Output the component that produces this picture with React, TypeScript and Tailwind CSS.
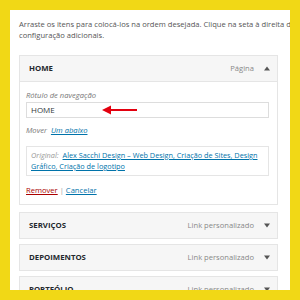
const rows = ['SERVIÇOS', 'DEPOIMENTOS', 'PORTFÓLIO'];

const Caret = ({ up }: { up?: boolean }) => (
  <svg width="6" height="5" viewBox="0 0 6 5" className="ml-[10px]">
    {up ? <path d="M0 4.5 L3 0.5 L6 4.5 Z" fill="#555" /> : <path d="M0 0.5 L3 4.5 L6 0.5 Z" fill="#555" />}
  </svg>
);

export default function App() {
  return (
    <div className="w-[300px] h-[300px] bg-[#f1d816] pt-[10px] pl-[10px]" style={{ fontFamily: '"Open Sans", "Noto Sans", sans-serif' }}>
      <div className="w-[280px] h-[280px] bg-white overflow-hidden pl-[9px] pr-[12px] pt-[9px] text-[7.6px] text-[#555]">
        <div className="leading-[11px] whitespace-nowrap">
          <div>Arraste os itens para colocá-los na ordem desejada. Clique na seta à direita do item para revelar</div>
          <div>configuração adicionais.</div>
        </div>

        {/* item aberto */}
        <div className="mt-[14px] border border-[#e5e5e5]">
          <div className="h-[26px] bg-[#f6f6f6] border-b border-[#e5e5e5] flex items-center pl-[9px] pr-[7px]">
            <span className="font-bold text-[#23282d] text-[7.8px]">HOME</span>
            <span className="ml-auto text-[#888]">Página</span>
            <Caret up />
          </div>
          <div className="pl-[6px] pr-[8px] pt-[8px] pb-[8px]">
            <div className="italic text-[#777] leading-[11px]">Rótulo de navegação</div>
            <div className="relative mt-[1px] h-[16px] border border-[#ddd] flex items-center pl-[4px] text-[#32373c] text-[8px]">
              HOME
              <svg width="36" height="10" viewBox="0 0 36 10" className="absolute left-[75px] top-[2px]">
                <path d="M8 5 H35" stroke="#e3000f" strokeWidth="2" />
                <path d="M0 5 L9 0.5 L9 9.5 Z" fill="#e3000f" />
              </svg>
            </div>
            <div className="mt-[7px] leading-[11px]">
              <span className="italic text-[#777]">Mover</span>
              <a className="ml-[4px] italic underline text-[#0073aa]">Um abaixo</a>
            </div>
            <div className="mt-[10px] border border-[#e5e5e5] px-[4px] py-[3px] leading-[11px] whitespace-nowrap text-[7.3px]">
              <span className="italic text-[#999]">Original:</span>{' '}
              <a className="ml-[2px] underline text-[#0073aa]">Alex Sacchi Design – Web Design, Criação de Sites, Design</a>
              <br />
              <a className="underline text-[#0073aa]">Gráfico, Criação de logotipo</a>
            </div>
            <div className="mt-[9px] leading-[11px]">
              <a className="underline text-[#a00]">Remover</a>
              <span className="text-[#999]"> | </span>
              <a className="underline text-[#0073aa]">Cancelar</a>
            </div>
          </div>
        </div>

        <div className="mt-[7px] flex flex-col gap-[5px]">
          {rows.map((r) => (
            <div key={r} className="h-[27px] bg-[#f6f6f6] border border-[#e5e5e5] flex items-center pl-[9px] pr-[7px]">
              <span className="font-bold text-[#23282d] text-[7.8px]">{r}</span>
              <span className="ml-auto text-[#888]">Link personalizado</span>
              <Caret />
            </div>
          ))}
        </div>
      </div>
    </div>
  );
}
